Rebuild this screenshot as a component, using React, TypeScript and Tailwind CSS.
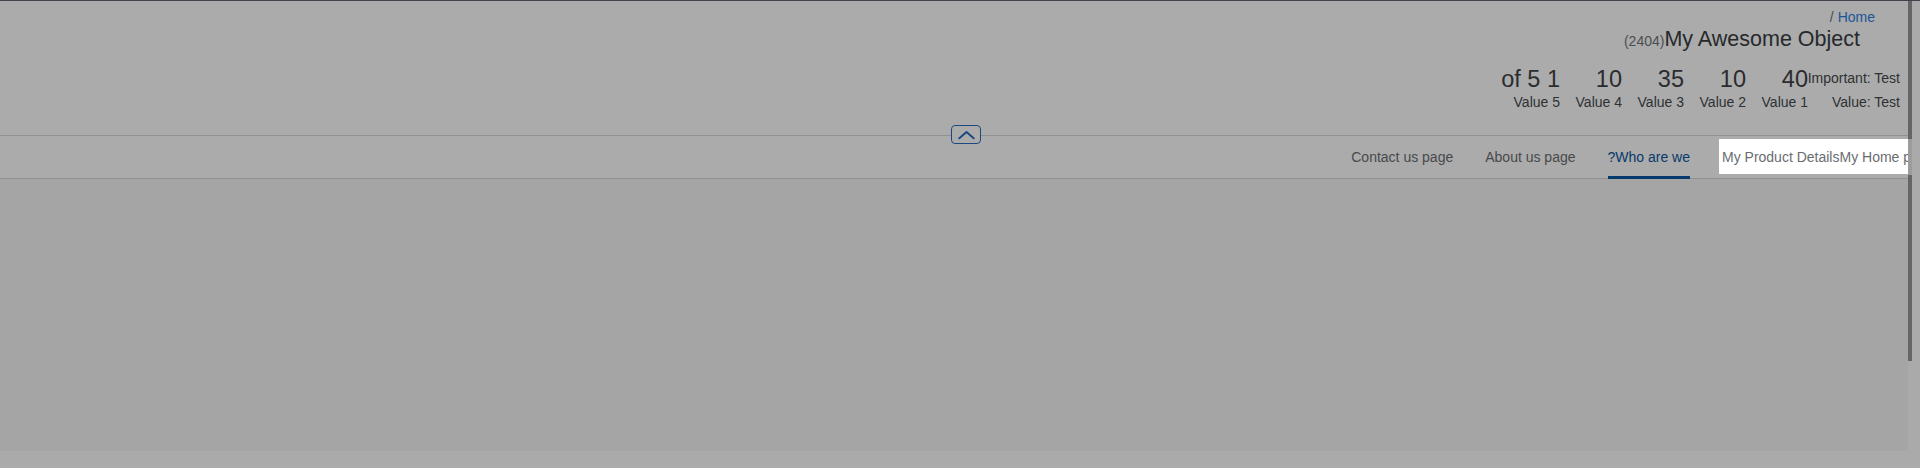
export default function App() {
  const kpis = [
    { v: "of 5 1", l: "Value 5", first: true },
    { v: "10", l: "Value 4" },
    { v: "35", l: "Value 3" },
    { v: "10", l: "Value 2" },
    { v: "40", l: "Value 1" },
  ];
  return (
    <div className="w-[1920px] h-[468px] overflow-hidden flex flex-col bg-[#aaaaaa] border-t border-[#3f444a] font-['Liberation_Sans',Arial,sans-serif] text-[14px]">
      <div className="flex h-[450px]">
        <div className="relative w-[1908px] flex flex-col">
          {/* Header */}
          <div className="h-[135px] shrink-0 border-b border-[#919191] bg-[#ababab] pt-[8px] flex flex-col items-end">
            <div className="leading-[17px] pr-[33px] whitespace-nowrap">
              <span className="text-[#474a4c]">/ </span>
              <span className="text-[#1a5596]">Home</span>
            </div>
            <div className="flex items-baseline pr-[48px] whitespace-nowrap">
              <span className="text-[14px] leading-[16px] text-[#4b4e51]">(2404)</span>
              <span className="text-[21.5px] leading-[26px] text-[#26292c]">My Awesome Object</span>
            </div>
            <div className="mt-[12px] pr-[8px] flex items-end">
              <div className="flex items-end gap-4">
                {kpis.map((k, i) => (
                  <div
                    key={i}
                    className={`flex flex-col items-end whitespace-nowrap ${k.first ? "" : "w-[46px]"}`}
                  >
                    <span className="text-[23.5px] leading-[30px] text-[#2a2c2f]">{k.v}</span>
                    <span className="text-[14px] leading-4 text-[#2e3134]">{k.l}</span>
                  </div>
                ))}
              </div>
              <div className="w-[92px] flex flex-col items-end gap-2 leading-4 whitespace-nowrap text-[#2e3134]">
                <span>Important: Test</span>
                <span>Value: Test</span>
              </div>
            </div>
          </div>
          {/* Anchor bar */}
          <div className="h-[43px] shrink-0 border-b border-[#919191] bg-[#ababab] flex justify-end">
            <div className="flex items-center text-[#47494b] leading-4 whitespace-nowrap">
              Contact us page
            </div>
            <div className="ml-8 flex items-center text-[#47494b] leading-4 whitespace-nowrap">
              About us page
            </div>
            <div className="relative ml-8 flex items-center text-[#063a6c] leading-4 whitespace-nowrap">
              ?Who are we
              <div className="absolute left-0 right-0 bottom-[-1px] h-[3px] bg-[#063a6c]" />
            </div>
            <div className="relative z-10 ml-[29px] mt-[3px] w-[189px] h-[35px] bg-white flex items-center px-[3px] overflow-hidden whitespace-nowrap leading-4 text-[#6a6d70]">
              My Product DetailsMy Home page
            </div>
          </div>
          {/* Content */}
          <div className="flex-1 bg-[#a5a5a5]" />
          {/* Collapse button */}
          <button className="absolute left-[951px] top-[124px] w-[30px] h-[19px] border border-[#1c4a80] rounded-[4px] bg-[#ababab] p-0">
            <svg width="28" height="17" viewBox="0 0 28 17" className="block">
              <polyline
                points="7.3,12.3 14.5,6 21.7,12.3"
                fill="none"
                stroke="#1c4a80"
                strokeWidth="2"
                strokeLinecap="round"
                strokeLinejoin="round"
              />
            </svg>
          </button>
        </div>
        {/* Scrollbar */}
        <div className="w-[12px] bg-[#aaaaaa] flex flex-col">
          <div className="w-[4px] h-[138px] bg-[#656565]" />
          <div className="w-[4px] h-[36px] bg-[#9c9c9c]" />
          <div className="w-[4px] h-[186px] bg-[#656565]" />
        </div>
      </div>
      <div className="h-[17px] bg-[#aaaaaa]" />
    </div>
  );
}
